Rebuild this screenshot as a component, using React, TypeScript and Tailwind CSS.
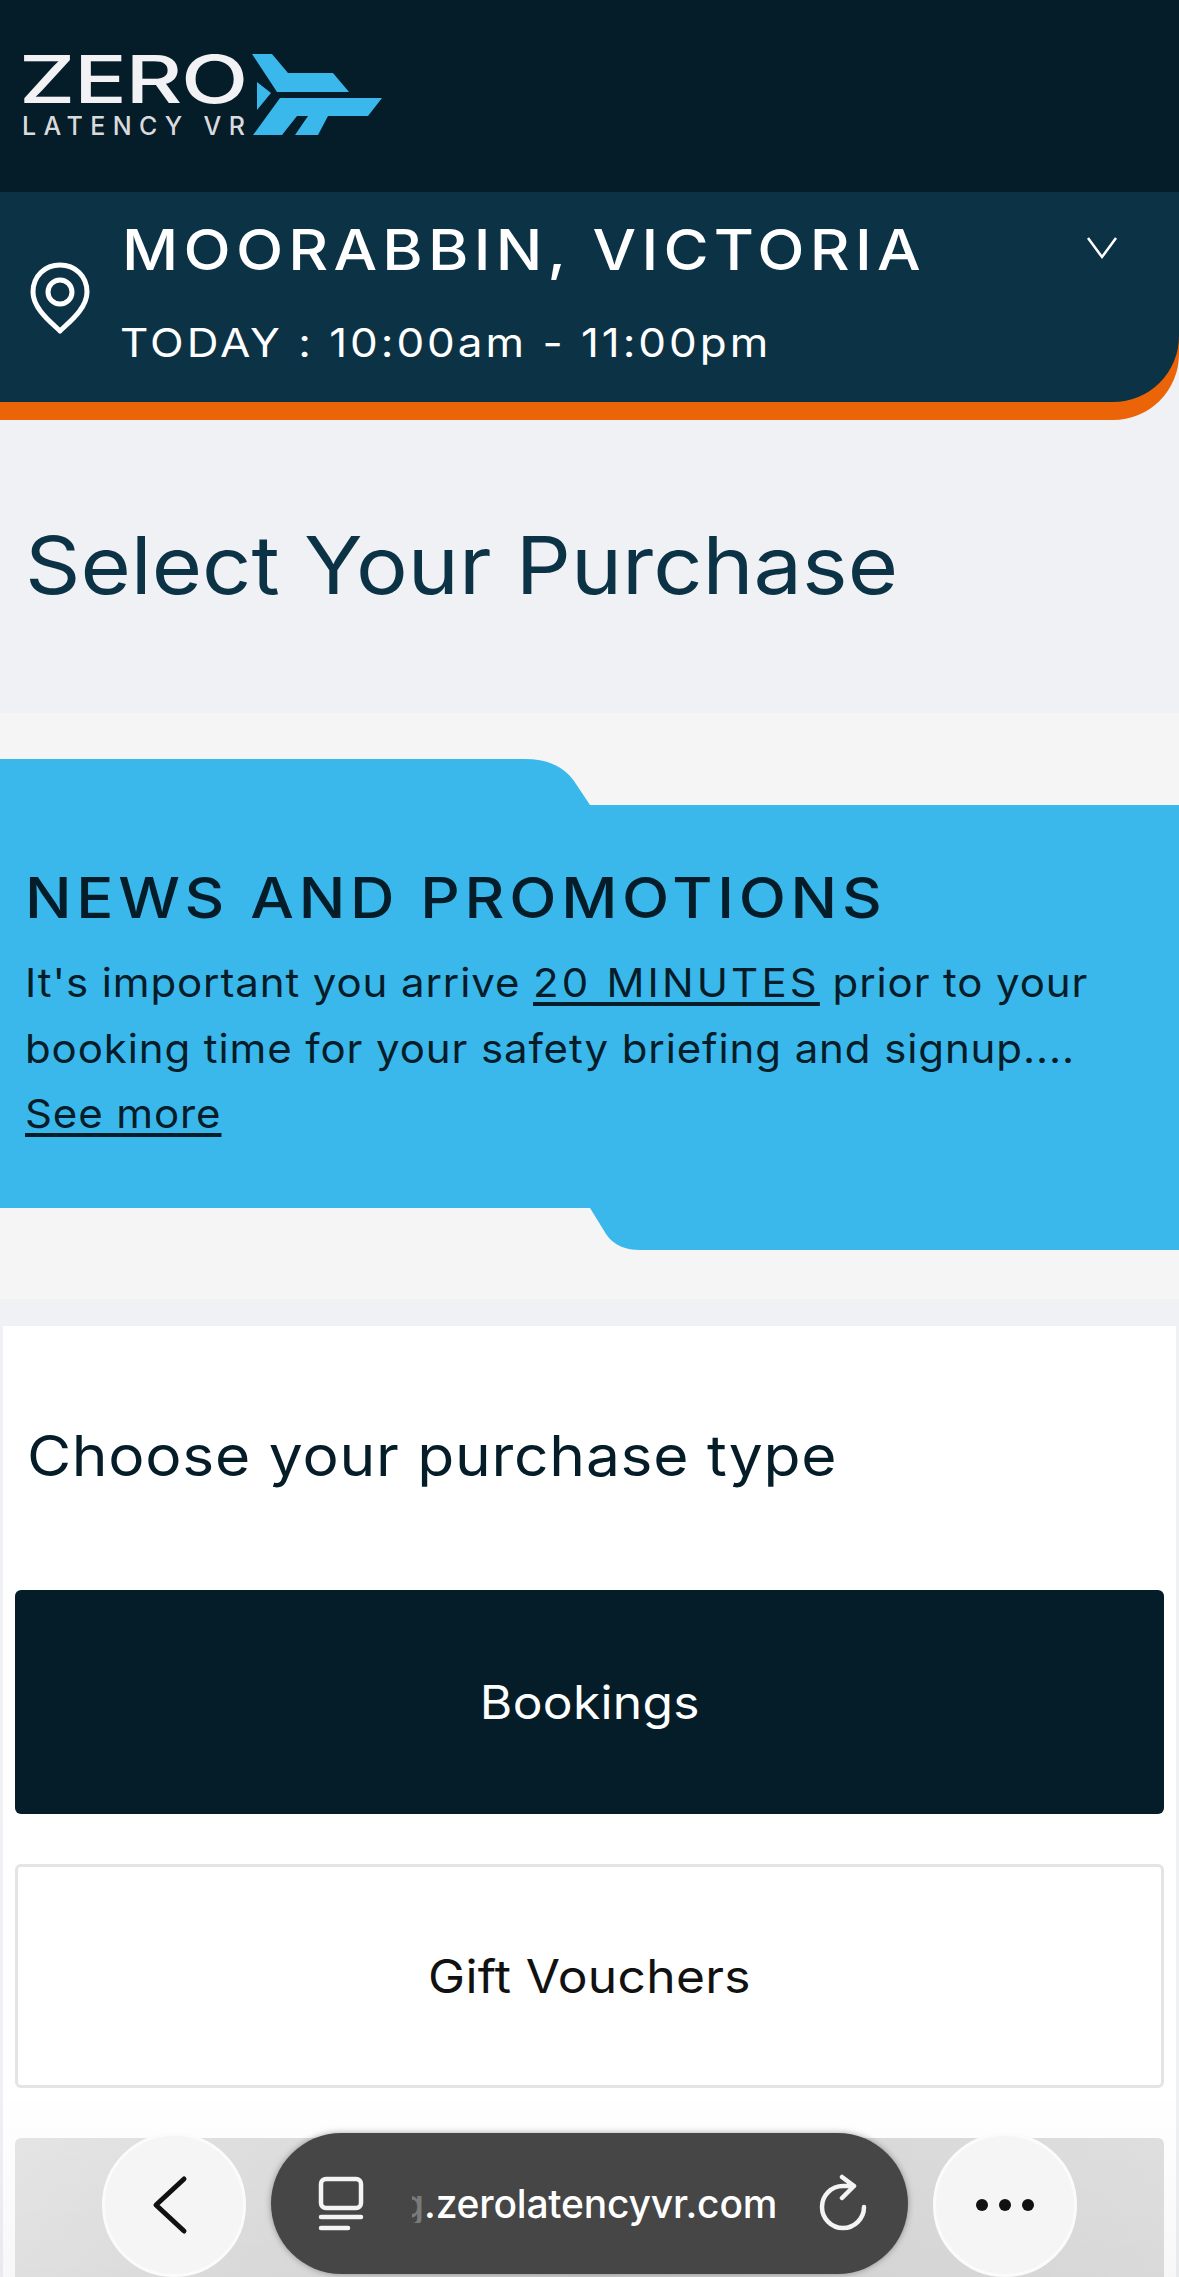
const sans = "font-['Inter','Open_Sans',sans-serif]";

function Logo() {
  return (
    <div className="relative h-[84px] w-[384px]">
      <span className="absolute left-[19px] top-[1px] origin-left scale-x-[1.33] font-['Inter',sans-serif] text-[66px] leading-[56px] font-medium tracking-[-1px] text-[#f2f2f4]">
        ZERO
      </span>
      <span className="absolute left-[22px] top-[63px] font-['Inter',sans-serif] text-[25px] leading-[26px] font-medium tracking-[7.4px] text-[#d9dadd]">
        LATENCY VR
      </span>
      <svg className="absolute left-0 top-0" width="384" height="90" viewBox="0 0 384 90" fill="#3ab8ec">
        <polygon points="252,4 272,4 288,23 333,23 349,42 277,42" />
        <polygon points="257,32 271,43 257,60" />
        <polygon points="280,48 382,48 368,66 328,66 318,85 295,85 308,66 297,66 282,85 253,85" />
      </svg>
    </div>
  );
}

export default function App() {
  return (
    <div className={`relative h-[2277px] w-[1179px] overflow-hidden bg-[#eff1f5] ${sans}`}>
      <header className="flex h-[192px] items-center bg-[#051c29] pb-[8px]">
        <Logo />
      </header>

      <div className="rounded-br-[66px] bg-[#ec6408]">
        <section className="flex h-[210px] rounded-br-[66px] bg-[#0c3245] text-white">
          <svg className="ml-[30px] mt-[70px] shrink-0" width="60" height="72" viewBox="0 0 60 72" fill="none" stroke="#fff" strokeWidth="5">
            <path d="M30 69 C22 61 3 47 3 30 C3 14 15 3 30 3 C45 3 57 14 57 30 C57 47 38 61 30 69 Z" strokeLinejoin="round" />
            <circle cx="30" cy="30" r="12" />
          </svg>
          <div className="ml-[32px] min-w-0 flex-1">
            <h2 className="mt-[25px] origin-left scale-x-[1.1] text-[56px] leading-[66px] tracking-[4.75px] font-medium whitespace-nowrap">MOORABBIN, VICTORIA</h2>
            <p className="-ml-[2px] mt-[34px] origin-left scale-x-[1.1] text-[40px] leading-[52px] tracking-[2.7px] whitespace-nowrap">TODAY : 10:00am - 11:00pm</p>
          </div>
          <svg className="mr-[61px] mt-[44px] shrink-0" width="32" height="24" viewBox="0 0 32 24" fill="none" stroke="#fff" strokeWidth="2.5">
            <polyline points="2,2 16,21 30,2" />
          </svg>
        </section>
        <div className="h-[18px]" />
      </div>

      <div className="flex h-[293px] items-center px-[25px] pb-[4px]">
        <h1 className="origin-left scale-x-[1.08] text-[80px] leading-[96px] text-[#0c3245] whitespace-nowrap">Select Your Purchase</h1>
      </div>

      <section className="h-[586px] bg-[#f5f5f5] pt-[46px]">
        <svg className="block h-[46px] w-full" viewBox="0 0 1179 46" fill="#3ab8ec">
          <path d="M0 0 H525 C548 0 564 8 574 22 L590 46 H0 Z" />
        </svg>
        <div className="h-[403px] bg-[#3ab8ec] px-[25px] pt-[61px] text-[#051c29]">
          <h3 className="origin-left scale-x-[1.1] text-[56px] leading-[64px] tracking-[4.3px] font-medium whitespace-nowrap">NEWS AND PROMOTIONS</h3>
          <p className="mt-[20px] origin-left scale-x-[1.05] text-[40px] leading-[65.5px] tracking-[0.85px] whitespace-nowrap">
            It's important you arrive <span className="tracking-[3px] underline underline-offset-[5px]">20 MINUTES</span> prior to your
            <br />
            booking time for your safety briefing and signup....
            <br />
            <span className="underline underline-offset-[5px]">See more</span>
          </p>
        </div>
        <svg className="block h-[42px] w-full" viewBox="0 0 1179 42" fill="#3ab8ec">
          <path d="M590 0 L606 26 C614 38 626 42 640 42 H1179 V0 Z" />
        </svg>
      </section>

      <main className="mx-[3px] mt-[27px] bg-white px-[12px]">
        <h2 className="origin-left scale-x-[1.08] pt-[94px] pl-[11px] text-[56px] leading-[72px] tracking-[0.7px] text-[#051c29]">Choose your purchase type</h2>
        <div className="mt-[98px] flex flex-col gap-[50px]">
          <button className="flex h-[224px] items-center justify-center rounded-[6px] bg-[#051c29] text-white">
            <span className="scale-x-[1.08] text-[46px] tracking-[0.3px]">Bookings</span>
          </button>
          <button className="flex h-[224px] items-center justify-center rounded-[6px] border-[3px] border-[#e4e4e4] bg-white text-[#111]">
            <span className="scale-x-[1.08] text-[46px] tracking-[0.3px]">Gift Vouchers</span>
          </button>
          <div className="h-[224px] rounded-[6px] bg-gradient-to-r from-[#e6e6e6] via-[#d6d6d6] to-[#e0e0e0]" />
        </div>
      </main>

      {/* browser toolbar floating over the page */}
      <div className="absolute inset-x-0 bottom-0 h-[190px] bg-gradient-to-b from-black/0 to-black/[0.03]">
        <div className="absolute bottom-0 left-[102px] flex h-[144px] w-[144px] items-center justify-center rounded-full border-[3px] border-[#fbfbfb] bg-[#f5f5f5] pr-[8px]">
          <svg width="44" height="60" viewBox="0 0 44 60" fill="none" stroke="#111" strokeWidth="5" strokeLinecap="round" strokeLinejoin="round">
            <path d="M36 4 L8 30 L36 56" />
          </svg>
        </div>
        <div className="absolute bottom-[3px] left-[271px] flex h-[141px] w-[637px] items-center rounded-full bg-[#464646] shadow-[0_0_6px_rgba(0,0,0,0.35)]">
          <svg className="ml-[47px] shrink-0" width="46" height="56" viewBox="0 0 46 56" fill="none" stroke="#f4f4f4" strokeWidth="4.5" strokeLinecap="round">
            <rect x="3" y="3" width="40" height="29" rx="5" />
            <path d="M3 41 H43 M3 52 H30" />
          </svg>
          <span className="ml-[48px] flex w-[375px] shrink-0 font-['Inter',sans-serif] text-[39px] leading-none font-medium tracking-[-0.2px] text-white whitespace-nowrap">
            <span className="flex w-[12px] shrink-0 justify-end overflow-hidden text-white/30">g</span>.zerolatencyvr.com
          </span>
          <svg className="ml-[31px] shrink-0" width="50" height="60" viewBox="0 0 50 60" fill="none" stroke="#f4f4f4" strokeWidth="4.5" strokeLinecap="round" strokeLinejoin="round">
            <path d="M36 12 H25 A21 21 0 1 0 46 33 M24 3 L36 12 L24 24" />
          </svg>
        </div>
        <div className="absolute bottom-0 left-[933px] flex h-[144px] w-[144px] items-center justify-center gap-[11px] rounded-full border-[3px] border-[#fbfbfb] bg-[#f5f5f5]">
          <span className="h-[12px] w-[12px] rounded-full bg-[#111]" />
          <span className="h-[12px] w-[12px] rounded-full bg-[#111]" />
          <span className="h-[12px] w-[12px] rounded-full bg-[#111]" />
        </div>
      </div>
    </div>
  );
}
